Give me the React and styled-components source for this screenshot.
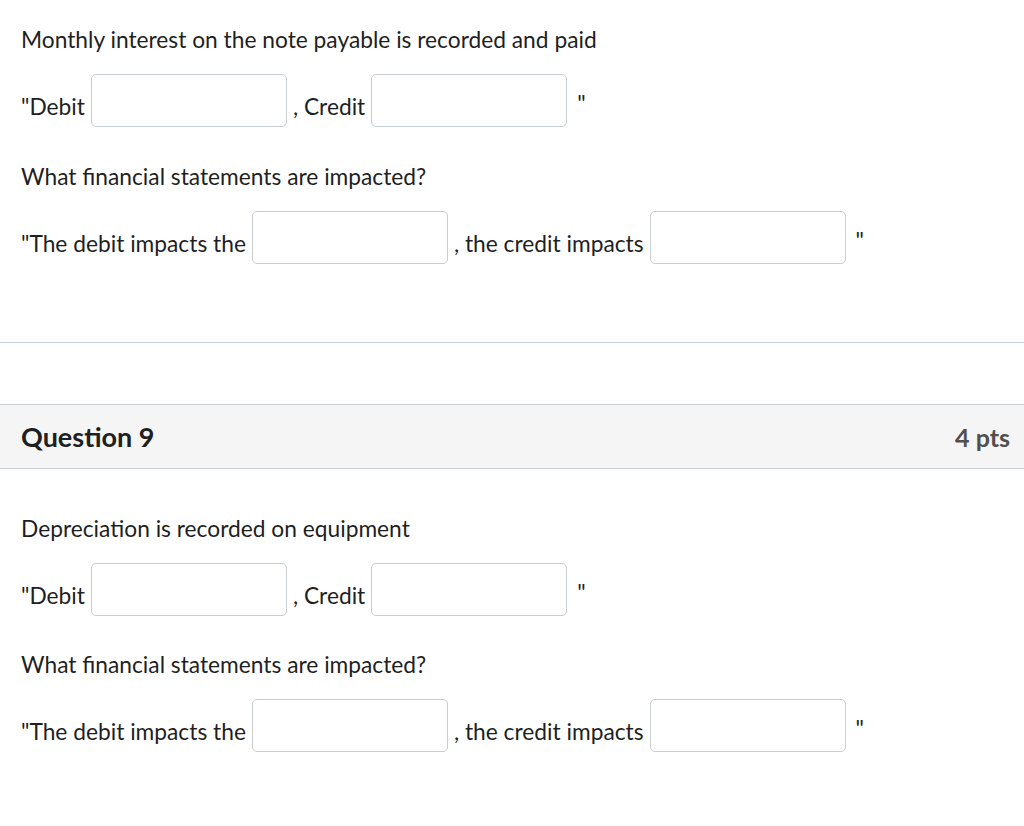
import styled, { createGlobalStyle } from "styled-components";

const Global = createGlobalStyle`
  body {
    margin: 0;
    background: #ffffff;
    font-family: Lato, "Open Sans", sans-serif;
    color: #1f1f1f;
  }
`;

const Page = styled.div`
  width: 1024px;
  padding-top: 26px;
`;

const Block = styled.section`
  padding: 0 21px;
`;

const Prompt = styled.p`
  margin: 0;
  font-size: 22.75px;
  line-height: 27px;
  margin-top: ${(p) => p.$top || 0}px;
`;

const Row = styled.div`
  display: flex;
  align-items: center;
  gap: 6px;
  margin-top: ${(p) => p.$top || 0}px;
  font-size: 22.75px;
  line-height: 27px;
`;

const Label = styled.span`
  padding-top: 11px;
`;

const Blank = styled.input`
  width: 196px;
  height: 53px;
  box-sizing: border-box;
  border: 1px solid #c7cdd1;
  border-radius: 5px;
  background: #fff;
  margin: 0;
  padding: 0 10px;
  font: inherit;
`;

const Quote = styled.span`
  margin-left: 4px;
  padding-top: 6px;
`;

const Divider = styled.hr`
  margin: 78px 0 0;
  border: none;
  border-top: 1px solid #c7cdd1;
`;

const QuestionHeader = styled.header`
  margin-top: 61px;
  height: 65px;
  box-sizing: border-box;
  display: flex;
  align-items: center;
  justify-content: space-between;
  padding: 0 14px 0 21px;
  background: #f5f5f5;
  border-top: 1px solid #c7cdd1;
  border-bottom: 1px solid #c7cdd1;
`;

const QuestionTitle = styled.h2`
  margin: 0;
  font-size: 27px;
  font-weight: 700;
`;

const Points = styled.span`
  font-size: 25px;
  font-weight: 700;
  color: #4f4f4f;
`;

function EntryRows({ top, gap }) {
  return (
    <>
      <Row $top={top}>
        <Label>"Debit</Label>
        <Blank />
        <Label>, Credit</Label>
        <Blank />
        <Quote>"</Quote>
      </Row>
      <Prompt $top={gap}>What financial statements are impacted?</Prompt>
      <Row $top={top}>
        <Label>"The debit impacts the</Label>
        <Blank />
        <Label>, the credit impacts</Label>
        <Blank />
        <Quote>"</Quote>
      </Row>
    </>
  );
}

export default function App() {
  return (
    <Page>
      <Global />
      <Block>
        <Prompt>Monthly interest on the note payable is recorded and paid</Prompt>
        <EntryRows top={21} gap={36} />
      </Block>
      <Divider />
      <QuestionHeader>
        <QuestionTitle>Question 9</QuestionTitle>
        <Points>4 pts</Points>
      </QuestionHeader>
      <Block>
        <Prompt $top={46}>Depreciation is recorded on equipment</Prompt>
        <EntryRows top={21} gap={35} />
      </Block>
    </Page>
  );
}
